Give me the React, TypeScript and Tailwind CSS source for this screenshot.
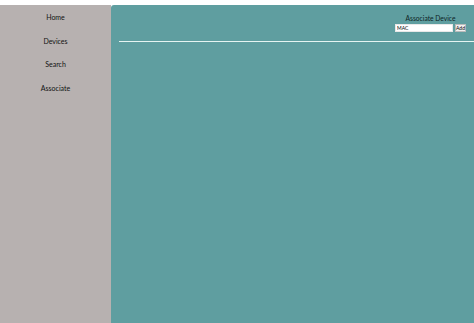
import React from 'react';

const navItems = ['Home', 'Devices', 'Search', 'Associate'];

export default function App() {
  return (
    <div
      className="flex h-[323px] w-[474px] flex-col overflow-hidden bg-white pt-[5px]"
      style={{ fontFamily: 'Lato, "Open Sans", sans-serif' }}
    >
      <div className="flex flex-1">
        <nav className="flex w-[111px] flex-col items-center bg-[#b7b1b0] pt-[8px]">
          {navItems.map((item) => (
            <div key={item} className="h-[23.7px] text-[7px] leading-[9px] text-[#111]">
              {item}
            </div>
          ))}
        </nav>
        <main className="flex flex-1 flex-col rounded-tl-[3px] bg-[#5f9ea0]">
          <div className="flex justify-end pr-[8px] pt-[9px]">
            <div className="flex flex-col items-center">
              <div className="text-[6.7px] leading-[9px] text-[#0d2324]">Associate Device</div>
              <div className="mt-[1px] flex items-center gap-[2px]">
                <input
                  defaultValue="MAC"
                  className="h-[8px] w-[58px] border border-[#e8e8e8] bg-white px-[1px] text-[5px] leading-[6px] text-black outline-none"
                />
                <button
                  type="button"
                  className="h-[8px] w-[11px] border border-[#bbb] bg-[#f0f0f0] text-[5px] leading-[6px] text-black"
                >
                  Add
                </button>
              </div>
            </div>
          </div>
          <div className="ml-[8px] mt-[9px] h-[1px] bg-[#e6f4f2]" />
        </main>
      </div>
    </div>
  );
}
